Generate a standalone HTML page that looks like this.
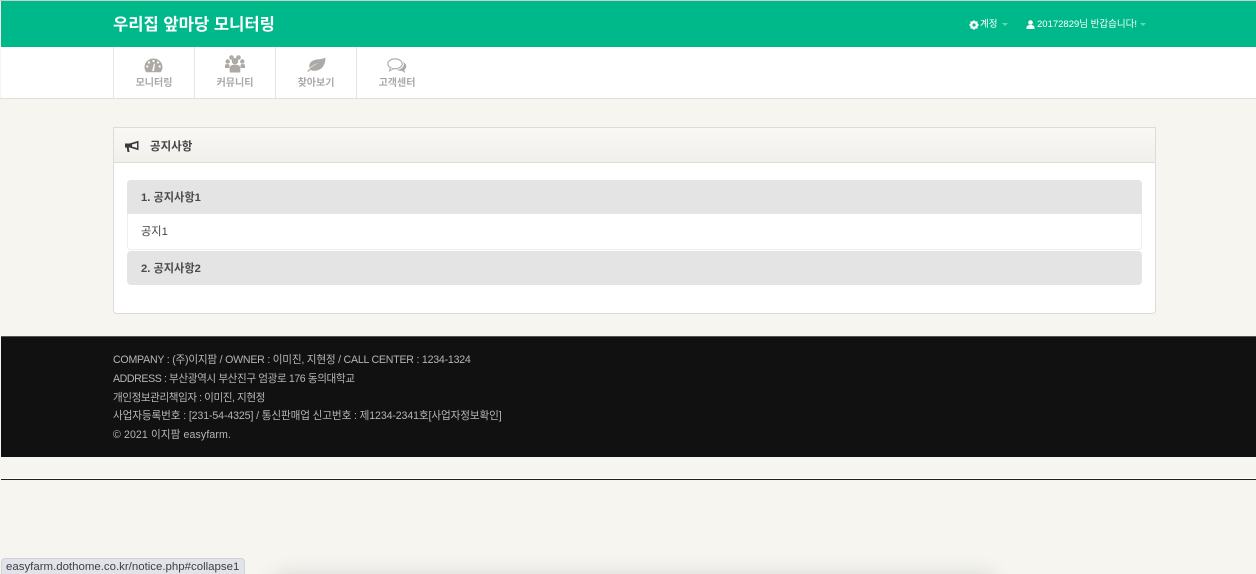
<!DOCTYPE html>
<html lang="ko"><head><meta charset="utf-8"><title>우리집 앞마당 모니터링</title>
<style>
html,body{margin:0;padding:0;height:574px;overflow:hidden}
body{width:1256px;background:#f6f5f0;position:relative;font-family:"Liberation Sans","Noto Sans CJK KR",sans-serif}
.a{position:absolute;white-space:nowrap}
svg{position:absolute;display:block}
.car{position:absolute;width:0;height:0;border-left:3.500px solid transparent;border-right:3.500px solid transparent;border-top:3.500px solid rgba(255,255,255,.4)}
.nav{font-size:10px;font-weight:700;color:#a9a9a9;line-height:12px;width:80px;text-align:center}
.sep{position:absolute;top:47px;width:1px;height:52px;background:#e4e4e4}
.foot{left:113px;font-size:10.6px;color:#b5b5b5;line-height:14px}
</style></head><body>
<div class="a" style="left:0;top:0;width:1256px;height:1px;background:#c9cfcc"></div>
<div class="a" style="left:1px;top:1px;width:1255px;height:46px;background:#00b98b"></div>
<div class="a" style="left:113px;top:13px;font-size:16.600px;font-weight:700;color:#fff;line-height:24px">우리집 앞마당 모니터링</div>

<svg style="left:969px;top:20px" width="10" height="10" viewBox="0 0 10 10"><circle cx="5" cy="5" r="2.800" fill="none" stroke="#fff" stroke-width="2.400"/><path d="M5 .3V2M5 8v1.700M.3 5H2M8 5h1.700M1.600 1.600l1.200 1.200M7.200 7.200l1.200 1.200M8.400 1.600 7.200 2.800M2.800 7.200 1.600 8.400" stroke="#fff" stroke-width="1.400"/></svg>
<div class="a" style="left:980px;top:19px;font-size:9.500px;color:#fff;line-height:12px">계정</div>
<div class="car" style="left:1002px;top:23px"></div>
<svg style="left:1026px;top:20px" width="9" height="9" viewBox="0 0 9 9"><circle cx="4.500" cy="2.500" r="2.300" fill="#fff"/><path d="M.5 9V7.500C.5 5.800 2 5 4.500 5S8.500 5.800 8.500 7.500V9Z" fill="#fff"/></svg>
<div class="a" style="left:1037px;top:19px;font-size:9.500px;color:#fff;line-height:12px">20172829님 반갑습니다!</div>
<div class="car" style="left:1140px;top:23px"></div>

<div class="a" style="left:1px;top:47px;width:1255px;height:51px;background:#fff"></div>
<div class="a" style="left:0;top:98px;width:1256px;height:1px;background:#dfdfdc"></div>
<div class="sep" style="left:113px"></div><div class="sep" style="left:194px"></div><div class="sep" style="left:275px"></div><div class="sep" style="left:356px"></div>

<svg style="left:144px;top:58px" width="19" height="15" viewBox="0 0 19 15"><path d="M9.500 0.500C4.500 0.500.5 4.300.5 9c0 2 .7 3.800 1.800 5.200h14.400c1.100-1.400 1.800-3.200 1.800-5.200C18.500 4.300 14.500.5 9.500.5Z" fill="#adaaa5"/><g fill="#fff"><circle cx="5" cy="4.500" r="1.100"/><circle cx="9.500" cy="3" r="1.100"/><circle cx="14" cy="4.500" r="1.100"/><circle cx="3.300" cy="8.500" r="1.100"/><circle cx="15.700" cy="8.500" r="1.100"/><path d="M8.200 12.500 10 5.500l1 .3-.9 6.700a1 1 0 0 1-1.900 0Z"/></g></svg>
<div class="a nav" style="left:114px;top:78px">모니터링</div>

<svg style="left:225px;top:55px" width="20" height="18" viewBox="0 0 20 18"><g fill="#adaaa5"><circle cx="6.500" cy="2.500" r="2.300"/><circle cx="13.500" cy="2.500" r="2.300"/><circle cx="2.700" cy="6.500" r="2.200"/><circle cx="17.300" cy="6.500" r="2.200"/><circle cx="10" cy="6.200" r="3.200"/><path d="M0 13v-2.500c0-1 1-1.500 2.500-1.500S4.500 9.500 4.500 10.500V13ZM15.500 13v-2.500c0-1 .5-1.500 2-1.500s2.500.5 2.500 1.500V13Z"/><path d="M4.700 17.500v-4.500c0-2 1.500-3.300 5.300-3.300s5.300 1.300 5.300 3.300v4.500Z"/></g></svg>
<div class="a nav" style="left:195px;top:78px">커뮤니티</div>

<svg style="left:306px;top:57px" width="20" height="15" viewBox="0 0 20 15"><path d="M19.500.5C17.500 2 14 2 10.500 2.500 6 3.200 3.300 5.800 3.300 9c0 .8.200 1.500.5 2.200C6 8.500 9 7 12.500 6 9 7.500 5 10 1.200 14.200l1 .8 2-2.300C5.500 13.600 7.500 14 9.500 13.700 16 13 19.500 8 19.500.5Z" fill="#adaaa5"/></svg>
<div class="a nav" style="left:276px;top:78px">찾아보기</div>

<svg style="left:387px;top:58px" width="20" height="16" viewBox="0 0 20 16"><ellipse cx="8" cy="5.800" rx="7.200" ry="5" fill="#fff" stroke="#adaaa5" stroke-width="1.100"/><path d="M3.500 9.500 2.500 13l3.500-2" fill="#fff" stroke="#adaaa5" stroke-width="1"/><path d="M16 4c2 1 3.300 2.500 3.300 4.300 0 1.500-.8 2.700-2 3.500l.8 3.200-3.300-2.300c-1.700.2-3.500 0-5-.8 3.500-.2 7-2.500 7-5.500 0-.9-.3-1.700-.8-2.400Z" fill="#adaaa5"/></svg>
<div class="a nav" style="left:357px;top:78px">고객센터</div>

<div class="a" style="left:113px;top:127px;width:1041px;height:185px;background:#fff;border:1px solid #dddcd8;border-radius:0 0 4px 4px"></div>
<div class="a" style="left:114px;top:128px;width:1041px;height:34px;background:linear-gradient(#f9f8f5,#f2f0eb);border-bottom:1px solid #dddcd8"></div>
<svg style="left:125px;top:140px" width="15" height="13" viewBox="0 0 15 13"><path d="M0 3.500h4.500v4H3.700l.8 4.500H2.500L1.700 7.500H0Z" fill="#3a3a3a"/><path d="M4.500 3.500 13.500.8v9.400L4.500 7.500Z" fill="#3a3a3a"/><path d="M7 4.500 12 3v5L7 6.500Z" fill="#f5f3ef"/></svg>
<div class="a" style="left:150px;top:139px;font-size:11.500px;font-weight:700;color:#444;line-height:16px">공지사항</div>

<div class="a" style="left:127px;top:180px;width:1015px;height:70px;box-sizing:border-box;border:1px solid #eeeeee;border-radius:4px;background:#fff"></div>
<div class="a" style="left:127px;top:180px;width:1015px;height:34px;background:#e4e4e4;border-radius:4px 4px 0 0"></div>
<div class="a" style="left:141px;top:191px;font-size:11.200px;font-weight:700;color:#4a4a4a;line-height:15px">1. 공지사항1</div>
<div class="a" style="left:141px;top:225px;font-size:11.200px;color:#444;line-height:15px">공지1</div>
<div class="a" style="left:127px;top:251px;width:1015px;height:34px;background:#e4e4e4;border-radius:4px"></div>
<div class="a" style="left:141px;top:262px;font-size:11.200px;font-weight:700;color:#4a4a4a;line-height:15px">2. 공지사항2</div>

<div class="a" style="left:1px;top:336px;width:1255px;height:121px;background:#111;border-top:1px solid #555;box-sizing:border-box"></div>
<div class="a foot" style="top:353px;letter-spacing:-.22px">COMPANY : (주)이지팜 / OWNER : 이미진, 지현정 / CALL CENTER : 1234-1324</div>
<div class="a foot" style="top:372px;letter-spacing:-.4px">ADDRESS : 부산광역시 부산진구 엄광로 176 동의대학교</div>
<div class="a foot" style="top:391px;letter-spacing:-.45px">개인정보관리책임자 : 이미진, 지현정</div>
<div class="a foot" style="top:409px;letter-spacing:-.12px">사업자등록번호 : [231-54-4325] / 통신판매업 신고번호 : 제1234-2341호[사업자정보확인]</div>
<div class="a foot" style="top:428px;letter-spacing:.1px">© 2021 이지팜 easyfarm.</div>

<div class="a" style="left:0;top:478px;width:1256px;height:1px;background:#fff"></div>
<div class="a" style="left:1px;top:479px;width:1255px;height:1px;background:#222"></div>

<div class="a" style="left:290px;top:590px;width:690px;height:10px;background:#d6d6d2;box-shadow:0 0 20px 14px #d2d2ce"></div>
<div class="a" style="left:1px;top:558px;width:244px;height:18px;box-sizing:border-box;background:#e1e3e8;border:1px solid #d0d2d6;border-radius:4px 4px 0 0;font-size:11.450px;line-height:17px;color:#3a3f48;padding-left:4px;font-family:'Liberation Sans',sans-serif">easyfarm.dothome.co.kr/notice.php#collapse1</div>
</body></html>
